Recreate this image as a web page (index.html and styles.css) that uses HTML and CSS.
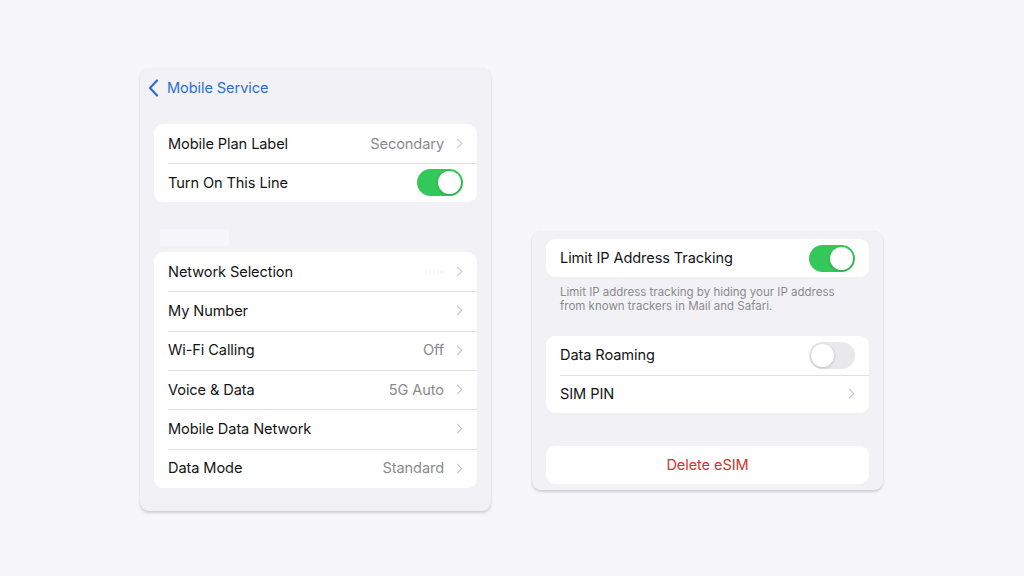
FILE: index.html
```html
<!DOCTYPE html>
<html>
<head>
<meta charset="utf-8">
<link rel="stylesheet" href="styles.css">
</head>
<body>
<div class="stage">
  <section class="panel panel-left">
    <div class="nav">
      <svg class="back" width="11" height="18" viewBox="0 0 11 18"><path d="M9 1.5 L2 9 L9 16.5" fill="none" stroke="#2b6fd3" stroke-width="2.2" stroke-linecap="round" stroke-linejoin="round"/></svg>
      <span class="nav-title">Mobile Service</span>
    </div>
    <div class="group group-first">
      <div class="row"><span class="label">Mobile Plan Label</span><span class="value">Secondary</span><span class="chev"></span></div>
      <div class="row"><span class="label">Turn On This Line</span><span class="switch on"><span class="knob"></span></span></div>
    </div>
    <div class="placeholder"></div>
    <div class="group group-tight">
      <div class="row"><span class="label">Network Selection</span><span class="value faint">·····</span><span class="chev"></span></div>
      <div class="row"><span class="label">My Number</span><span class="chev"></span></div>
      <div class="row"><span class="label">Wi-Fi Calling</span><span class="value">Off</span><span class="chev"></span></div>
      <div class="row"><span class="label">Voice &amp; Data</span><span class="value">5G Auto</span><span class="chev"></span></div>
      <div class="row"><span class="label">Mobile Data Network</span><span class="chev"></span></div>
      <div class="row"><span class="label">Data Mode</span><span class="value">Standard</span><span class="chev"></span></div>
    </div>
  </section>

  <section class="panel panel-right">
    <div class="group">
      <div class="row r38"><span class="label">Limit IP Address Tracking</span><span class="switch on"><span class="knob"></span></span></div>
    </div>
    <p class="footer">Limit IP address tracking by hiding your IP address<br>from known trackers in Mail and Safari.</p>
    <div class="group">
      <div class="row r385"><span class="label">Data Roaming</span><span class="switch"><span class="knob"></span></span></div>
      <div class="row r385"><span class="label">SIM PIN</span><span class="chev"></span></div>
    </div>
    <div class="group delete-group">
      <div class="row r38 center"><span class="danger">Delete eSIM</span></div>
    </div>
  </section>
</div>
</body>
</html>
```

FILE: styles.css
```css
* { box-sizing: border-box; }
html, body { margin: 0; padding: 0; }
body {
  background: #f7f7f9;
  width: 1024px;
  height: 576px;
  overflow: hidden;
  font-family: Inter, "Liberation Sans", sans-serif;
  color: #141414;
}
.stage {
  display: flex;
  align-items: flex-start;
  gap: 41px;
  padding: 68px 0 0 140px;
}
.panel {
  width: 351px;
  background: #f2f2f6;
  border-radius: 9px;
  box-shadow: 0 2px 3px rgba(0,0,0,0.16), 0 0 1px rgba(0,0,0,0.06);
  padding: 0 14px;
}
.panel-left { height: 443px; }
.panel-right { margin-top: 163px; padding-top: 8px; padding-bottom: 6px; }
.nav {
  height: 40px;
  display: flex;
  align-items: center;
  gap: 8px;
  margin-left: -6px;
}
.back { display: block; }
.nav-title {
  color: #2b6fd3;
  font-size: 14.6px;
  letter-spacing: -0.1px;
}
.group {
  background: #fff;
  border-radius: 9px;
  overflow: hidden;
}
.group-first { margin-top: 16px; }
.placeholder {
  margin: 27px 0 0 6px;
  width: 69px;
  height: 17px;
  background: #f7f7fa;
  border-radius: 2px;
}
.group-tight { margin-top: 6px; }
.row {
  position: relative;
  height: 39px;
  display: flex;
  align-items: center;
  padding: 0 14px;
  font-size: 14.6px;
  letter-spacing: -0.1px;
}
.group-tight .row { height: 39.33px; }
.row.r38 { height: 38px; }
.row.r385 { height: 38.5px; }
.row + .row::before {
  content: "";
  position: absolute;
  top: 0;
  left: 14px;
  right: 0;
  border-top: 1px solid #e0e0e3;
}
.label { flex: 1; }
.value { color: #8a8a8e; margin-right: 10px; }
.value.faint { color: #f2f2f4; }
.chev {
  width: 7px;
  height: 7px;
  border-top: 1.5px solid #c2c2c6;
  border-right: 1.5px solid #c2c2c6;
  transform: rotate(45deg);
  margin-right: 2px;
}
.switch {
  width: 46px;
  height: 27px;
  border-radius: 14px;
  background: #e9e9eb;
  position: relative;
  flex: none;
}
.switch.on { background: #34c759; }
.knob {
  position: absolute;
  top: 2px;
  left: 2px;
  width: 23px;
  height: 23px;
  border-radius: 50%;
  background: #fff;
  box-shadow: 0 1px 3px rgba(0,0,0,0.18), 0 0 1px rgba(0,0,0,0.1);
}
.switch.on .knob { left: 21px; }
.footer {
  margin: 0;
  padding: 8px 14px 0;
  height: 59px;
  font-size: 11.5px;
  line-height: 14px;
  color: #8a8a8e;
}
.delete-group { margin-top: 33px; }
.center { justify-content: center; }
.danger { color: #d1322c; }
```
